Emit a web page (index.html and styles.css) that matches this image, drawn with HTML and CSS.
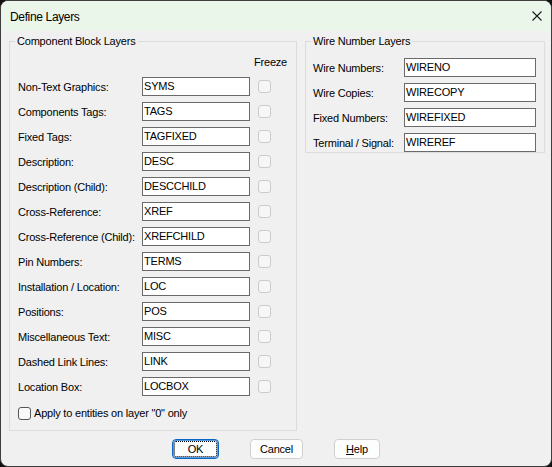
FILE: index.html
```html
<!DOCTYPE html>
<html>
<head>
<meta charset="utf-8">
<title>Define Layers</title>
<link rel="stylesheet" href="styles.css">
</head>
<body>
<div class="window">
  <div class="titlebar">
    <span class="title">Define Layers</span>
    <svg class="close" width="10" height="10" viewBox="0 0 10 10"><path d="M0.5 0.5 L9.5 9.5 M9.5 0.5 L0.5 9.5" stroke="#1a1a1a" stroke-width="1.1" fill="none"/></svg>
  </div>
  <div class="content">
    <div class="groups">
      <fieldset class="group group-comp">
        <legend>Component Block Layers</legend>
        <div class="freeze-head">Freeze</div>
        <div class="rows">
          <div class="row"><span class="lbl">Non-Text Graphics:</span><span class="field">SYMS</span><span class="cb dis"></span></div>
          <div class="row"><span class="lbl">Components Tags:</span><span class="field">TAGS</span><span class="cb dis"></span></div>
          <div class="row"><span class="lbl">Fixed Tags:</span><span class="field">TAGFIXED</span><span class="cb dis"></span></div>
          <div class="row"><span class="lbl">Description:</span><span class="field">DESC</span><span class="cb dis"></span></div>
          <div class="row"><span class="lbl">Description (Child):</span><span class="field">DESCCHILD</span><span class="cb dis"></span></div>
          <div class="row"><span class="lbl">Cross-Reference:</span><span class="field">XREF</span><span class="cb dis"></span></div>
          <div class="row"><span class="lbl">Cross-Reference (Child):</span><span class="field">XREFCHILD</span><span class="cb dis"></span></div>
          <div class="row"><span class="lbl">Pin Numbers:</span><span class="field">TERMS</span><span class="cb dis"></span></div>
          <div class="row"><span class="lbl">Installation / Location:</span><span class="field">LOC</span><span class="cb dis"></span></div>
          <div class="row"><span class="lbl">Positions:</span><span class="field">POS</span><span class="cb dis"></span></div>
          <div class="row"><span class="lbl">Miscellaneous Text:</span><span class="field">MISC</span><span class="cb dis"></span></div>
          <div class="row"><span class="lbl">Dashed Link Lines:</span><span class="field">LINK</span><span class="cb dis"></span></div>
          <div class="row"><span class="lbl">Location Box:</span><span class="field">LOCBOX</span><span class="cb dis"></span></div>
        </div>
        <div class="apply"><span class="cb on"></span><span>Apply to entities on layer "0" only</span></div>
      </fieldset>
      <fieldset class="group group-wire">
        <legend>Wire Number Layers</legend>
        <div class="rows">
          <div class="row"><span class="lbl w">Wire Numbers:</span><span class="field wf">WIRENO</span></div>
          <div class="row"><span class="lbl w">Wire Copies:</span><span class="field wf">WIRECOPY</span></div>
          <div class="row"><span class="lbl w">Fixed Numbers:</span><span class="field wf">WIREFIXED</span></div>
          <div class="row"><span class="lbl w">Terminal / Signal:</span><span class="field wf">WIREREF</span></div>
        </div>
      </fieldset>
    </div>
    <div class="buttons">
      <button class="btn ok">OK</button>
      <button class="btn cancel">Cancel</button>
      <button class="btn help"><u>H</u>elp</button>
    </div>
  </div>
</div>
</body>
</html>
```
FILE: styles.css
```css
html, body {
  margin: 0;
  padding: 0;
  background: #101010;
}
body {
  font-family: "Liberation Sans", Arial, sans-serif;
  font-size: 11px;
  letter-spacing: -0.2px;
  color: #000;
}
.window {
  box-sizing: border-box;
  width: 552px;
  height: 467px;
  border: 1px solid #3e3e3e;
  border-radius: 8px;
  background: #f0f0f0;
  overflow: hidden;
}
.titlebar {
  height: 30px;
  background: #ebf6eb;
  display: flex;
  align-items: center;
  justify-content: space-between;
  padding: 0 9px 0 9px;
}
.title {
  font-size: 12px;
  letter-spacing: -0.35px;
  margin-top: 1px;
  color: #000;
}
.close {
  display: block;
  margin-top: -1px;
}
.content {
  padding: 4px 6px 0 8px;
}
.groups {
  display: flex;
  align-items: flex-start;
  gap: 8px;
}
.group {
  margin: 0;
  border: 1px solid #dcdcdc;
  min-width: 0;
}
.group legend {
  line-height: 13px;
  padding: 0 2px;
  margin-left: -3px;
}
.group-comp {
  width: 288px;
  box-sizing: border-box;
  padding: 0 8px 10px 8px;
}
.group-wire {
  width: 240px;
  box-sizing: border-box;
  padding: 0 8px 0 7px;
}
.group-wire legend {
  margin-left: -2px;
}
.freeze-head {
  line-height: 13px;
  padding-left: 236px;
  margin-top: 8px;
  margin-bottom: 8px;
}
.rows {
  display: flex;
  flex-direction: column;
  gap: 6px;
}
.group-wire .rows {
  margin-top: 10px;
}
.row {
  display: flex;
  align-items: center;
  height: 19px;
}
.lbl {
  width: 124px;
  flex: none;
  line-height: 13px;
  margin-top: 1px;
}
.lbl.w {
  width: 91px;
}
.field {
  box-sizing: border-box;
  width: 108px;
  height: 19px;
  border: 1px solid #6a6a6a;
  background: #fff;
  padding: 0 1px;
  line-height: 16px;
  flex: none;
}
.field.wf {
  width: 132px;
}
.cb {
  box-sizing: border-box;
  width: 13px;
  height: 13px;
  border-radius: 3px;
  flex: none;
}
.cb.dis {
  margin-left: 8px;
  border: 1px solid #cbcbcb;
  background: #f6f6f6;
}
.cb.on {
  border: 1px solid #555;
  background: #f9f9f9;
  margin-right: 3px;
}
.apply {
  display: flex;
  align-items: center;
  line-height: 13px;
  margin-top: 11px;
}
.buttons {
  display: flex;
  justify-content: center;
  gap: 31px;
  margin-top: 8px;
  padding-right: 2px;
}
.btn {
  box-sizing: border-box;
  height: 20px;
  padding: 0;
  font-family: "Liberation Sans", Arial, sans-serif;
  font-size: 11px;
  letter-spacing: -0.2px;
  color: #000;
  background: #fdfdfd;
  border: 1px solid #d0d0d0;
  border-radius: 4px;
  line-height: 17px;
}
.btn.ok {
  width: 47px;
  border: 1px solid #0a64c4;
  box-shadow: inset 0 0 0 1px #5a9be0;
  outline: 1px dotted #000;
  outline-offset: -3px;
}
.btn.cancel {
  width: 53px;
}
.btn.help {
  width: 46px;
}
```
